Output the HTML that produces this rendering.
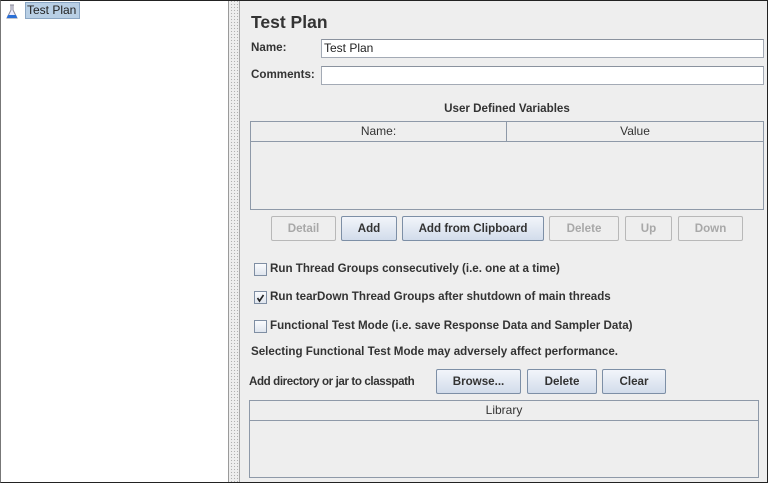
<!DOCTYPE html>
<html><head><style>
*{box-sizing:border-box;margin:0;padding:0}
body{width:768px;height:483px;overflow:hidden;background:#eeeeee;font-family:"Liberation Sans",Arial,sans-serif;position:relative}
#frame{position:absolute;left:0;top:0;width:768px;height:483px;border:1px solid #222;border-left-color:#777;pointer-events:none;z-index:9}
.abs{position:absolute}
.lbl{position:absolute;font-weight:bold;font-size:11.6px;color:#333;white-space:nowrap;line-height:14px}
.fld{position:absolute;background:#fff;border:1px solid #a3aab5;border-top-color:#8a929e;font-size:12px;padding-left:2px;line-height:16px;color:#222}
.btn{position:absolute;height:25px;border:1px solid #7d8fa6;background:linear-gradient(#f2f5fa,#d2dceb);font-weight:bold;font-size:11.6px;color:#333;text-align:center;line-height:23px;border-radius:2px}
.dis{border-color:#b8b8b8;background:#eeeeee;color:#a8a8a8}
.tbl{position:absolute;border:1px solid #8e99a8}
.hdr{position:absolute;left:0;top:0;height:20px;border-bottom:1px solid #8e99a8;font-size:12px;color:#333;text-align:center;line-height:19px}
.cb{position:absolute;width:13px;height:13px;border:1px solid #7f8ea3;background:linear-gradient(#fafbfd,#dfe5ee)}
</style></head><body>
<div id="frame"></div>
<div class="abs" style="left:0;top:0;width:229px;height:483px;background:#fff;border-right:1px solid #9a9a9a"></div>
<div class="abs" style="left:230px;top:0;width:9px;height:483px;background-image:radial-gradient(#b0b0b0 0.6px,transparent 0.8px);background-size:3px 3px;background-color:#eee"></div>
<div class="abs" style="left:239px;top:0;width:1px;height:483px;background:#a8a8a8"></div>
<svg class="abs" style="left:5px;top:4px" width="14" height="16" viewBox="0 0 14 16"><path d="M5 1h4M6 1v5L2 14h10L8 6V1" fill="#eef" stroke="#8a8a99" stroke-width="1"/><path d="M3 11h8l1.2 3H1.8z" fill="#2a6fd6"/></svg>
<div class="abs" style="left:25px;top:2px;width:55px;height:17px;background:#b8cfe5;border:1px solid #8aa6c4;font-size:12px;line-height:15px;color:#222;padding-left:1px">Test Plan</div>

<div class="lbl" style="left:251px;top:12px;font-size:17.5px;line-height:20px">Test Plan</div>
<div class="lbl" style="left:251px;top:41px">Name:</div>
<div class="fld" style="left:321px;top:39px;width:443px;height:19px">Test Plan</div>
<div class="lbl" style="left:251px;top:68px">Comments:</div>
<div class="fld" style="left:321px;top:66px;width:443px;height:19px"></div>
<div class="lbl" style="left:250px;top:102px;width:514px;text-align:center">User Defined Variables</div>
<div class="tbl" style="left:250px;top:121px;width:514px;height:89px">
<div class="hdr" style="width:256px;border-right:1px solid #8e99a8">Name:</div>
<div class="hdr" style="left:256px;width:256px">Value</div>
</div>
<div class="btn dis" style="left:271px;top:216px;width:65px">Detail</div>
<div class="btn" style="left:341px;top:216px;width:56px">Add</div>
<div class="btn" style="left:402px;top:216px;width:142px">Add from Clipboard</div>
<div class="btn dis" style="left:549px;top:216px;width:70px">Delete</div>
<div class="btn dis" style="left:625px;top:216px;width:47px">Up</div>
<div class="btn dis" style="left:678px;top:216px;width:65px">Down</div>

<div class="cb" style="left:254px;top:263px"></div>
<div class="lbl" style="left:270px;top:262px">Run Thread Groups consecutively (i.e. one at a time)</div>
<div class="cb" style="left:254px;top:291px"><svg width="11" height="11" style="position:absolute;left:0;top:0"><path d="M2.5 6l2 3 4-6" fill="none" stroke="#222" stroke-width="1.6"/></svg></div>
<div class="lbl" style="left:270px;top:290px">Run tearDown Thread Groups after shutdown of main threads</div>
<div class="cb" style="left:254px;top:320px"></div>
<div class="lbl" style="left:270px;top:319px">Functional Test Mode (i.e. save Response Data and Sampler Data)</div>
<div class="lbl" style="left:251px;top:345px">Selecting Functional Test Mode may adversely affect performance.</div>
<div class="lbl" style="left:249px;top:375px;letter-spacing:-0.4px">Add directory or jar to classpath</div>
<div class="btn" style="left:436px;top:369px;width:85px">Browse...</div>
<div class="btn" style="left:527px;top:369px;width:70px">Delete</div>
<div class="btn" style="left:602px;top:369px;width:64px">Clear</div>
<div class="tbl" style="left:249px;top:400px;width:510px;height:78px">
<div class="hdr" style="width:508px">Library</div>
</div>
</body></html>
